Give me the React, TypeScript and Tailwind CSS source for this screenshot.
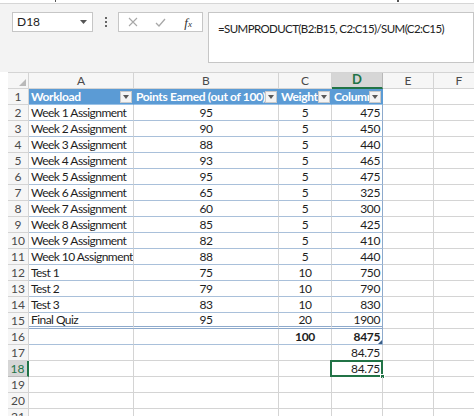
import React from "react";

type Row = [string, number, number, number];
const data: Row[] = [
  ["Week 1 Assignment", 95, 5, 475],
  ["Week 2 Assignment", 90, 5, 450],
  ["Week 3 Assignment", 88, 5, 440],
  ["Week 4 Assignment", 93, 5, 465],
  ["Week 5 Assignment", 95, 5, 475],
  ["Week 6 Assignment", 65, 5, 325],
  ["Week 7 Assignment", 60, 5, 300],
  ["Week 8 Assignment", 85, 5, 425],
  ["Week 9 Assignment", 82, 5, 410],
  ["Week 10 Assignment", 88, 5, 440],
  ["Test 1", 75, 10, 750],
  ["Test 2", 79, 10, 790],
  ["Test 3", 83, 10, 830],
  ["Final Quiz", 95, 20, 1900],
];

function DropBtn() {
  return (
    <div className="absolute right-[1px] top-[2px] w-[12px] h-[12px] bg-[#f4f4f4] border border-[#c9c9c9] flex items-center justify-center">
      <svg width="6" height="4" viewBox="0 0 6 4">
        <path d="M0 0h6L3 4z" fill="#595959" />
      </svg>
    </div>
  );
}

const rowHead =
  "h-[16px] flex items-center justify-center text-[12px] text-[#4a4a4a] bg-[#f6f6f6] border-r border-b border-[#d4d4d4]";
const cellCore = "h-[16px] flex items-center text-[12px] text-[#1e1e1e] whitespace-nowrap overflow-hidden";
const cellBase = `${cellCore} tracking-[-0.35px]`;
const cellA = `${cellCore} tracking-[-0.55px]`;
const hdrCell = `${cellBase} bg-[#5b9bd5] text-white font-bold pl-[2px] relative border-r border-[#5b9bd5] border-b border-b-[#9bc2e6]`;
const empty = "h-[16px] border-r border-b border-[#d4d4d4]";

export default function App() {
  return (
    <div
      className="w-[474px] h-[416px] overflow-hidden bg-white relative"
      style={{ fontFamily: "Lato, 'Noto Sans', sans-serif" }}
    >
      {/* top ribbon remnant */}
      <div className="h-[4px] bg-white border-b border-[#d6d6d6] relative">
        <div className="absolute left-[55px] top-0 w-[1px] h-[2px] bg-[#555]" />
        <div className="absolute left-[397px] top-0 w-[2px] h-[2px] bg-[#555]" />
      </div>

      {/* formula bar */}
      <div className="h-[68px] bg-[#f3f3f3] flex items-start pt-[8px]">
        <div className="ml-[12px] w-[81px] h-[20px] bg-white border border-[#c6c6c6] flex items-center justify-between pl-[4px] pr-[5px]">
          <span className="text-[12px] text-[#222]">D18</span>
          <svg width="7" height="4" viewBox="0 0 7 4">
            <path d="M0 0h7L3.5 4z" fill="#555" />
          </svg>
        </div>
        <div className="w-[25px] h-[20px] flex flex-col items-center justify-center gap-[2px]">
          <div className="w-[2px] h-[2px] bg-[#666]" />
          <div className="w-[2px] h-[2px] bg-[#666]" />
          <div className="w-[2px] h-[2px] bg-[#666]" />
        </div>
        <div className="w-[85px] h-[20px] bg-white border border-[#c6c6c6] grid grid-cols-3 items-center justify-items-center">
          <svg width="10" height="10" viewBox="0 0 10 10">
            <path d="M1 1L9 9M9 1L1 9" stroke="#a8a8a8" strokeWidth="1.1" />
          </svg>
          <svg width="11" height="9" viewBox="0 0 11 9">
            <path d="M1 5L4 8L10 1" stroke="#a8a8a8" strokeWidth="1.3" fill="none" />
          </svg>
          <span className="text-[13px] text-[#333] leading-none" style={{ fontFamily: "'Liberation Serif', serif" }}>
            <i>f</i>
            <i className="text-[9px]">x</i>
          </span>
        </div>
        <div className="ml-[5px] w-[266px] h-[51px] bg-white border border-[#c6c6c6] pl-[9px] pt-[2px]">
          <span className="text-[11.5px] tracking-[-0.6px] leading-[16px] text-[#222] whitespace-nowrap">
            =SUMPRODUCT(B2:B15, C2:C15)/SUM(C2:C15)
          </span>
        </div>
      </div>

      {/* grid */}
      <div className="flex pl-[8px]">
        <div className="grid grid-cols-[21px_105px_145px_53px_51px_51px_51px] border-t border-[#d4d4d4]">
          {/* column headers */}
          <div className="h-[16px] bg-[#f6f6f6] border-r border-b border-[#d4d4d4] relative">
            <svg className="absolute right-[2px] bottom-[2px]" width="7" height="7" viewBox="0 0 7 7">
              <path d="M7 0V7H0z" fill="#b9b9b9" />
            </svg>
          </div>
          {["A", "B", "C"].map((c) => (
            <div key={c} className={rowHead}>
              {c}
            </div>
          ))}
          <div className="h-[16px] flex items-center justify-center text-[13px] font-bold text-[#217346] bg-[#d6d6d6] border-r border-[#b8b8b8] border-b-2 border-b-[#217346]">
            D
          </div>
          {["E", "F"].map((c) => (
            <div key={c} className={rowHead}>
              {c}
            </div>
          ))}

          {/* row 1 header */}
          <div className={rowHead}>1</div>
          <div className={hdrCell}>
            Workload
            <DropBtn />
          </div>
          <div className={hdrCell}>
            Points Earned (out of 100)
            <DropBtn />
          </div>
          <div className={hdrCell}>
            Weight
            <DropBtn />
          </div>
          <div className={hdrCell}>
            Column1
            <DropBtn />
          </div>
          <div className={empty} />
          <div className={empty} />

          {data.map((r, i) => {
            const last = i === data.length - 1;
            const bb = last
              ? "border-b-[3px] border-double border-b-[#8eaacc]"
              : "border-b border-b-[#a9c0da]";
            return (
              <React.Fragment key={i}>
                <div className={rowHead}>{i + 2}</div>
                <div className={`${cellA} pl-[2px] border-r border-r-[#d4d4d4] ${bb}`}>{r[0]}</div>
                <div className={`${cellBase} justify-center border-r border-r-[#d4d4d4] ${bb}`}>{r[1]}</div>
                <div className={`${cellBase} justify-center border-r border-r-[#d4d4d4] ${bb}`}>{r[2]}</div>
                <div className={`${cellBase} justify-end pr-[2px] border-r border-r-[#8eaacc] ${bb}`}>{r[3]}</div>
                <div className={empty} />
                <div className={empty} />
              </React.Fragment>
            );
          })}

          {/* row 16 totals */}
          <div className={rowHead}>16</div>
          <div className={`${cellBase} border-r border-r-[#d4d4d4] border-b border-b-[#a9c0da]`} />
          <div className={`${cellBase} border-r border-r-[#d4d4d4] border-b border-b-[#a9c0da]`} />
          <div className={`${cellBase} justify-center font-bold border-r border-r-[#d4d4d4] border-b border-b-[#a9c0da]`}>100</div>
          <div className={`${cellBase} justify-end pr-[2px] font-bold border-r border-r-[#8eaacc] border-b border-b-[#a9c0da] relative overflow-visible`}>
            8475
            <svg className="absolute right-[0px] bottom-[0px]" width="4" height="4" viewBox="0 0 4 4">
              <path d="M4 0V4H0z" fill="#3c5f86" />
            </svg>
          </div>
          <div className={empty} />
          <div className={empty} />

          {/* rows 17-21 */}
          {[17, 18, 19, 20, 21].map((n) => {
            const sel = n === 18;
            return (
              <React.Fragment key={n}>
                {sel ? (
                  <div className="h-[16px] flex items-center justify-center text-[12px] text-[#217346] bg-[#d6d6d6] border-b border-[#b8b8b8] border-r-2 border-r-[#217346]">
                    18
                  </div>
                ) : (
                  <div className={rowHead}>{n}</div>
                )}
                <div className={empty} />
                <div className={empty} />
                <div className={empty} />
                <div className={`${cellBase} justify-end pr-[2px] border-r border-b border-[#d4d4d4] relative overflow-visible`}>
                  {n === 17 || n === 18 ? "84.75" : ""}
                  {sel && (
                    <>
                      <div className="absolute left-[-2px] top-[-1px] right-[-1px] bottom-[-1px] border-2 border-[#217346] pointer-events-none" />
                      <div className="absolute right-[-3px] bottom-[-3px] w-[5px] h-[5px] bg-[#217346] border border-white" />
                    </>
                  )}
                </div>
                <div className={empty} />
                <div className={empty} />
              </React.Fragment>
            );
          })}
        </div>
      </div>
    </div>
  );
}
